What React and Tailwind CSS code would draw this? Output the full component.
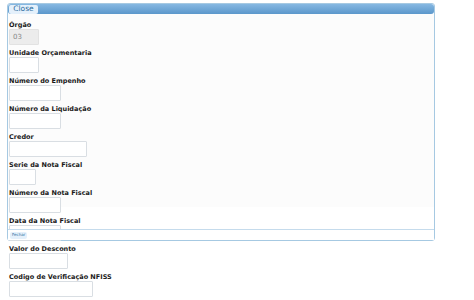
import React from "react";

const fields = [
  { label: "Órgão", w: "w-[30px]", value: "03", disabled: true },
  { label: "Unidade Orçamentaria", w: "w-[30px]" },
  { label: "Número do Empenho", w: "w-[52px]" },
  { label: "Número da Liquidação", w: "w-[52px]" },
  { label: "Credor", w: "w-[78px]" },
  { label: "Serie da Nota Fiscal", w: "w-[27px]" },
  { label: "Número da Nota Fiscal", w: "w-[52px]" },
  { label: "Data da Nota Fiscal", w: "w-[52px]" },
  { label: "Valor do Desconto", w: "w-[59px]" },
  { label: "Codigo de Verificação NFISS", w: "w-[84px]" },
];

export default function App() {
  return (
    <div className="w-[474px] h-[300px] bg-white overflow-hidden font-['DejaVu_Sans',sans-serif]">
      <div className="ml-[7px] mt-[3px] w-[428px] h-[238px] border border-[#a6c9e2] rounded-[3px] flex flex-col bg-white">
        <div className="h-[10px] shrink-0 rounded-[3px] bg-gradient-to-b from-[#86b8e2] to-[#5b97cb] flex items-center pl-[1px]">
          <div className="h-[9px] w-[29px] bg-[#e4f0fb] rounded-[2px] flex items-center justify-center text-[7.5px] leading-none text-[#2e6e9e]">
            Close
          </div>
        </div>
        <div className="h-[193px] shrink-0 bg-[#fcfcfc] pl-[1px] pt-[3px]">
          {fields.map((f) => (
            <div key={f.label} className="flex flex-col">
              <div className="h-[12px] flex items-end pb-[1px] text-[6.5px] font-bold text-[#1a1a1a] leading-none">
                {f.label}
              </div>
              <div
                className={`${f.w} h-[16px] border rounded-[1px] flex items-center pl-[3px] text-[7px] ${
                  f.disabled
                    ? "bg-[#ececec] border-[#e2e2e2] text-[#888]"
                    : "bg-white border-[#d9dee3]"
                }`}
              >
                {f.value}
              </div>
            </div>
          ))}
        </div>
        <div className="flex-1" />
        <div className="relative z-10 h-[11px] shrink-0 bg-white border-t border-[#c5dbec] flex items-center pl-[2px]">
          <div className="h-[7px] px-[2px] bg-[#e4f0fb] rounded-[2px] flex items-center text-[4px] leading-none text-[#2e6e9e]">
            Fechar
          </div>
        </div>
      </div>
    </div>
  );
}
